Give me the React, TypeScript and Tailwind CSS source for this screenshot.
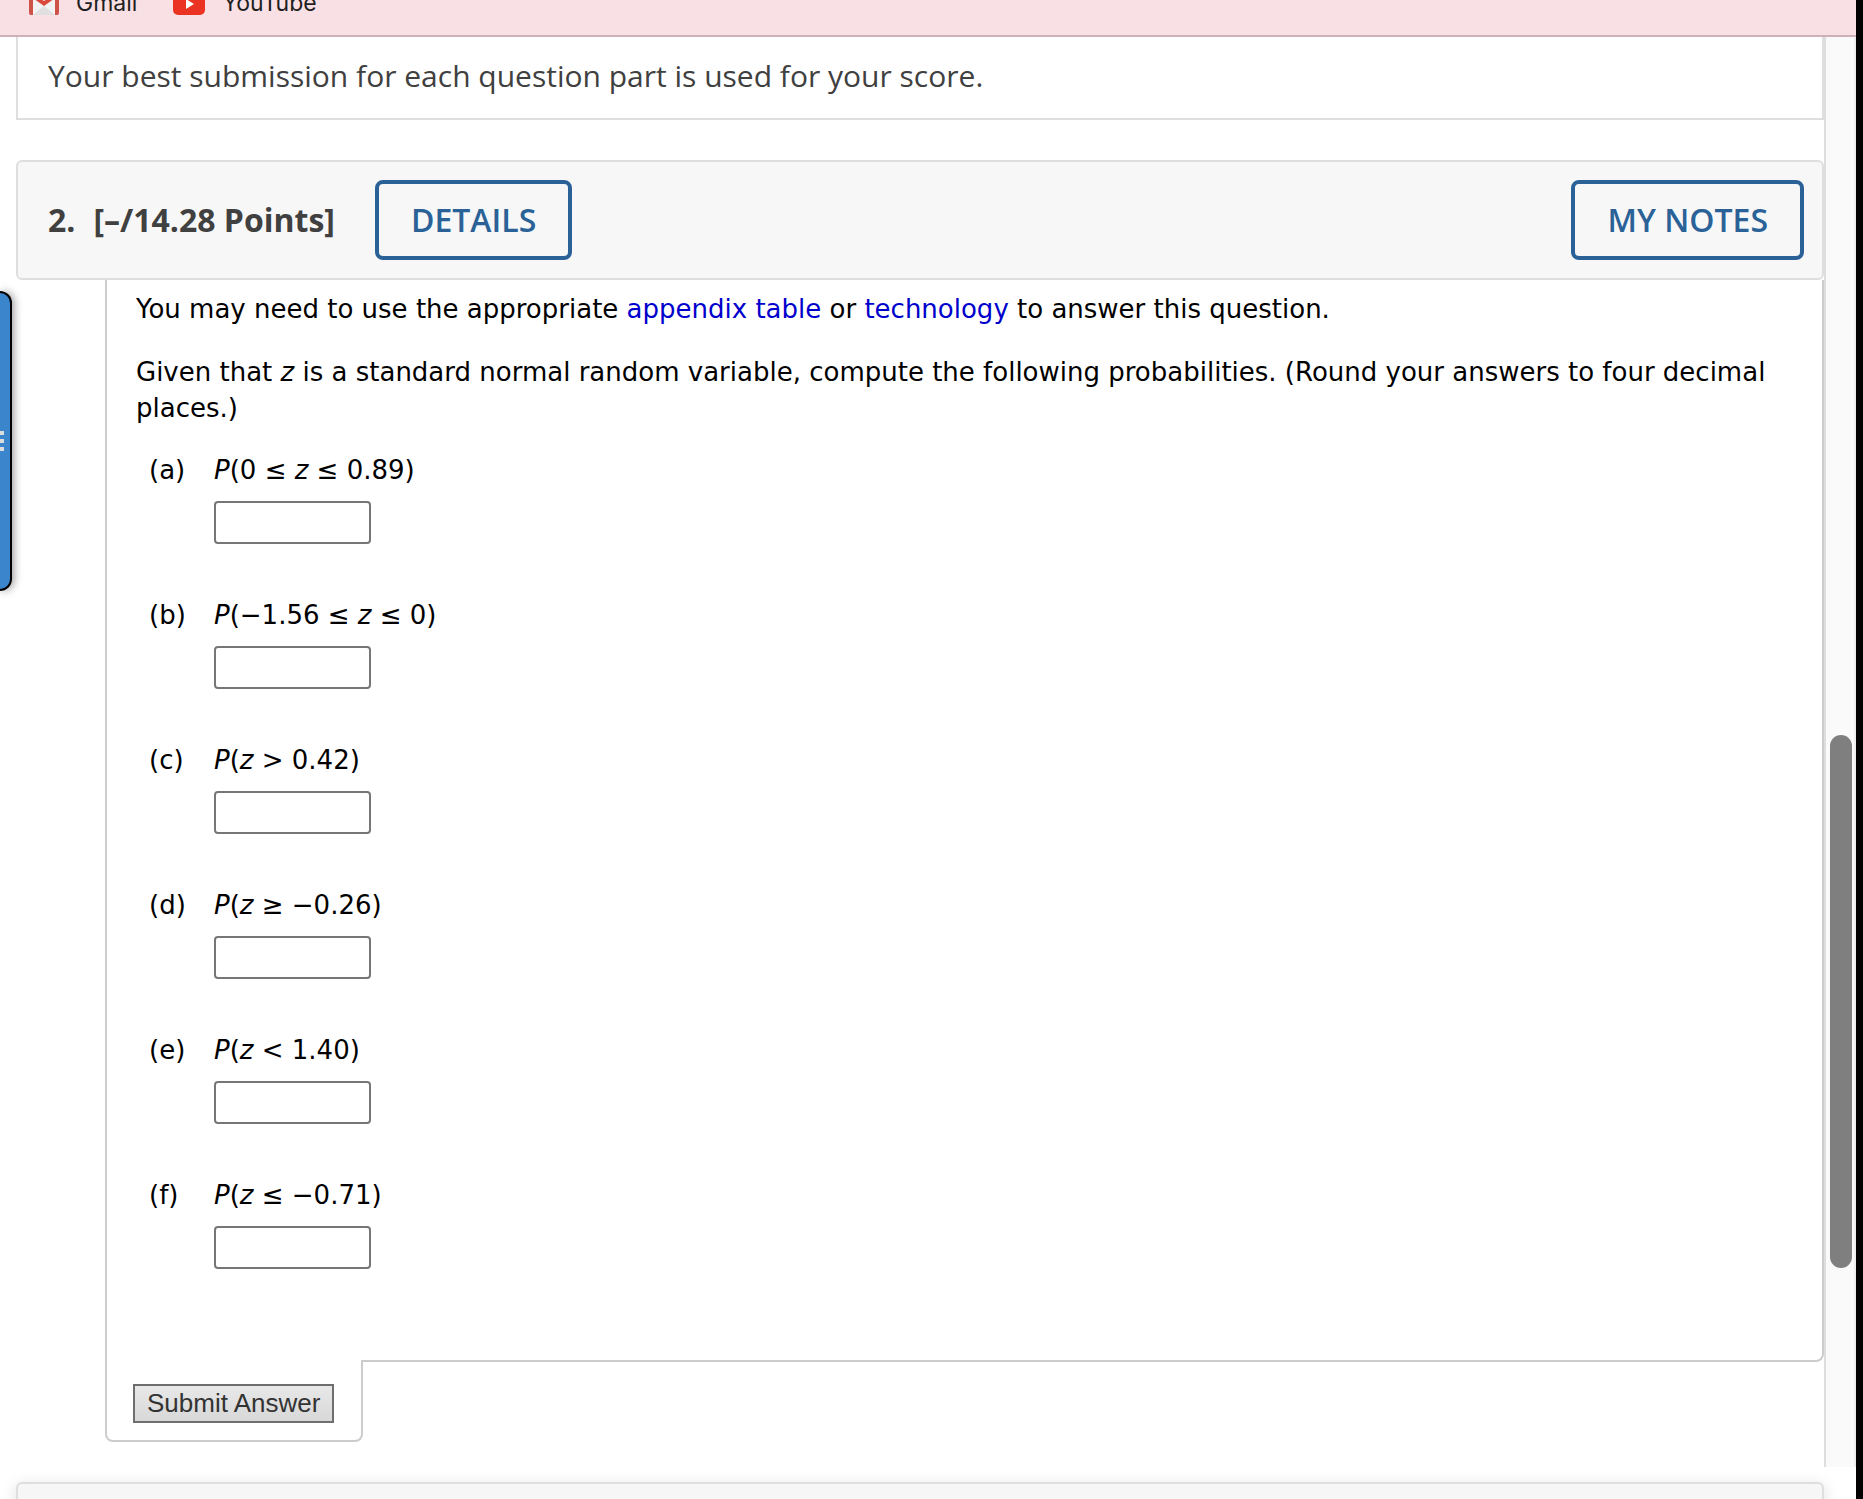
import React from "react";

const parts = [
  { id: "a", expression: <><i>P</i>(0 ≤ <i>z</i> ≤ 0.89)</> },
  { id: "b", expression: <><i>P</i>(−1.56 ≤ <i>z</i> ≤ 0)</> },
  { id: "c", expression: <><i>P</i>(<i>z</i> &gt; 0.42)</> },
  { id: "d", expression: <><i>P</i>(<i>z</i> ≥ −0.26)</> },
  { id: "e", expression: <><i>P</i>(<i>z</i> &lt; 1.40)</> },
  { id: "f", expression: <><i>P</i>(<i>z</i> ≤ −0.71)</> },
];

const GmailIcon = () => (
  <svg width="30" height="23" viewBox="0 0 30 23" aria-hidden="true">
    <rect width="30" height="23" rx="2" fill="#f2f2f2" />
    <path d="M4 23 L15 14 L26 23 Z" fill="#e0e0e0" />
    <path d="M0 2 a2 2 0 0 1 2 -2 L4 2 V23 H2 a2 2 0 0 1 -2 -2 Z" fill="#cf5348" />
    <path d="M30 2 a2 2 0 0 0 -2 -2 L26 2 V23 H28 a2 2 0 0 0 2 -2 Z" fill="#cf5348" />
    <path d="M1 0 L15 9 L29 0 V4 L15 14 L1 4 Z" fill="#d8493b" />
  </svg>
);

const YoutubeIcon = () => (
  <svg width="32" height="23" viewBox="0 0 32 23" aria-hidden="true">
    <rect width="32" height="23" rx="5" fill="#eb3323" />
    <path d="M13 7 L21 12 L13 17 Z" fill="#fff" />
  </svg>
);

const BookmarksBar = () => (
  <nav className="flex h-[37px] shrink-0 items-end gap-9 overflow-hidden border-b-2 border-[#ccb1b9] bg-[#f9e0e4] pl-[29px] pb-5 font-['Inter',sans-serif] text-[23px] leading-none text-[#1f1f1f]">
    <a href="#gmail" className="flex items-end gap-[17px]">
      <GmailIcon />
      <span>Gmail</span>
    </a>
    <a href="#youtube" className="flex items-end gap-[17px]">
      <YoutubeIcon />
      <span>YouTube</span>
    </a>
  </nav>
);

const QuestionHeader = () => (
  <header className="flex items-center justify-between rounded-md border-2 border-[#dedede] bg-[#f7f7f7] py-[18px] pl-[30px] pr-[18px]">
    <div className="flex items-center">
      <h2 className="mr-10 text-[32px] font-bold leading-10 text-[#404040]">
        <span className="mr-[18px]">2.</span>
        [–/14.28 Points]
      </h2>
      <button className="h-20 rounded-lg border-4 border-[#2a6297] px-8 text-[32px] font-semibold leading-10 text-[#2a6297]">
        DETAILS
      </button>
    </div>
    <button className="h-20 rounded-lg border-4 border-[#2a6297] px-8 text-[32px] font-semibold leading-10 text-[#2a6297]">
      MY NOTES
    </button>
  </header>
);

const QuestionBody = () => (
  <div className="ml-[89px] font-['DejaVu_Sans',sans-serif] text-[26px] leading-9 text-black">
    <div className="rounded-br-lg border-2 border-t-0 border-[#ccc] pb-[38px] pl-[29px] pr-8 pt-[11px]">
      <p>
        You may need to use the appropriate{" "}
        <a href="#appendix" className="text-[#0000cc]">appendix table</a> or{" "}
        <a href="#technology" className="text-[#0000cc]">technology</a> to answer this question.
      </p>
      <p className="mt-[27px]">
        Given that <i>z</i> is a standard normal random variable, compute the following
        probabilities. (Round your answers to four decimal places.)
      </p>
      <ol className="mt-[26px] pl-[13px]">
        {parts.map((part) => (
          <li key={part.id} className="flex h-[145px]">
            <span className="w-[65px]">({part.id})</span>
            <div className="flex flex-col items-start">
              <label htmlFor={`part-${part.id}`}>{part.expression}</label>
              <input
                id={`part-${part.id}`}
                type="text"
                className="mt-[13px] h-[43px] w-[157px] rounded border-2 border-[#767676] bg-white px-1"
              />
            </div>
          </li>
        ))}
      </ol>
    </div>
    {/* tab that hangs off the bottom edge of the question */}
    <div className="-mt-[2px] w-fit rounded-b-lg border-2 border-t-0 border-[#ccc] bg-white pb-[17px] pl-[26px] pr-[27px] pt-6">
      <button className="block border-2 border-[#6e6e6e] bg-linear-to-b from-[#e8e8e8] to-[#d8d8d8] px-3 font-['Liberation_Sans',sans-serif] text-[26px] leading-[35px] text-[#333]">
        Submit Answer
      </button>
    </div>
  </div>
);

const SideTab = () => (
  <button
    aria-label="Open menu"
    className="absolute left-0 top-[291px] flex h-[300px] w-3 flex-col items-start justify-center gap-1 rounded-r-xl border-2 border-l-0 border-black bg-[#3b85cc] shadow-[2px_0_8px_rgba(0,0,0,0.4)]"
  >
    <span className="h-1 w-1 bg-[#ddd]" />
    <span className="h-1 w-1 bg-[#ddd]" />
    <span className="h-1 w-1 bg-[#ddd]" />
  </button>
);

const Scrollbar = () => (
  <div className="mb-8 w-8 shrink-0 border-l-2 border-r-2 border-l-[#dedede] border-r-[#eee] bg-[#fafafa] pl-1 pt-[698px]">
    <div className="h-[533px] w-[22px] rounded-full bg-[#7f7f7f]" />
  </div>
);

const App = () => {
  return (
    <div className="relative flex h-screen flex-col overflow-hidden border-r-[7px] border-black bg-white font-['Open_Sans',sans-serif]">
      <BookmarksBar />
      <div className="flex min-h-0 flex-1">
        <main className="flex min-w-0 flex-1 flex-col pl-4">
          <section className="border-2 border-t-0 border-[#dedede] bg-white px-[30px] pb-5 pt-[17px] text-[30px] leading-[44px] text-[#404040]">
            Your best submission for each question part is used for your score.
          </section>
          <section className="mt-10">
            <QuestionHeader />
            <QuestionBody />
          </section>
          <div className="mt-10 min-h-5 flex-1 rounded-t-md border-2 border-b-0 border-[#dedede] bg-[#f6f6f6] shadow-[0_4px_16px_rgba(0,0,0,0.15)]" />
        </main>
        <Scrollbar />
      </div>
      <SideTab />
    </div>
  );
};

export default App;
